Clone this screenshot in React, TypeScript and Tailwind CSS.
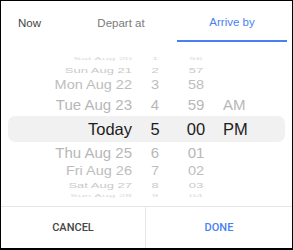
import React from "react";

type Row = {
  date: string;
  hour: string;
  min: string;
  ampm?: string;
  cls: string; // height, font size, colour
  squash: string; // vertical squash of the wheel
};

const rows: Row[] = [
  { date: "Sat Aug 20", hour: "1", min: "56", cls: "h-[10px] text-[12px] text-[#dadada]", squash: "scale-y-[0.35]" },
  { date: "Sun Aug 21", hour: "2", min: "57", cls: "h-[13px] text-[13px] text-[#c9c9c9]", squash: "scale-y-[0.6]" },
  { date: "Mon Aug 22", hour: "3", min: "58", cls: "h-[16px] text-[14.5px] text-[#bdbdbd]", squash: "scale-y-[0.85]" },
  { date: "Tue Aug 23", hour: "4", min: "59", ampm: "AM", cls: "h-[23px] text-[15px] text-[#b7b7b7]", squash: "scale-y-[0.95]" },
];

const rowsBelow: Row[] = [
  { date: "Thu Aug 25", hour: "6", min: "01", cls: "h-[21px] text-[15px] text-[#b7b7b7]", squash: "scale-y-[0.95]" },
  { date: "Fri Aug 26", hour: "7", min: "02", cls: "h-[17px] text-[14.5px] text-[#bdbdbd]", squash: "scale-y-[0.85]" },
  { date: "Sat Aug 27", hour: "8", min: "03", cls: "h-[11px] text-[13px] text-[#c9c9c9]", squash: "scale-y-[0.6]" },
  { date: "Sun Aug 28", hour: "9", min: "04", cls: "h-[10px] text-[12px] text-[#dadada]", squash: "scale-y-[0.35]" },
];

function WheelRow({ row }: { row: Row }) {
  return (
    <div className={`flex items-center pl-[7px] leading-none ${row.cls}`}>
      <div className={`flex items-center w-full ${row.squash}`}>
        <span className="w-[124px] text-right">{row.date}</span>
        <span className="w-[46px] text-center">{row.hour}</span>
        <span className="w-[36px] text-center">{row.min}</span>
        <span className="ml-[9px]">{row.ampm}</span>
      </div>
    </div>
  );
}

export default function App() {
  return (
    <div className="w-[293px] h-[250px] bg-white border border-black border-b-2 flex flex-col overflow-hidden font-['Liberation_Sans',Arial,sans-serif]">
      {/* Tabs */}
      <div className="flex h-[41px] shrink-0 pl-[6px] text-[11.5px]">
        <div className="w-[45px] flex items-center justify-center pt-[5px] text-[#454545]">
          Now
        </div>
        <div className="w-[112px] ml-[13px] flex items-center justify-center pt-[5px] text-[#7b7b7b]">
          Depart at
        </div>
        <div className="w-[110px] flex items-center justify-center pt-[5px] border-b-2 border-[#4a7ff2] text-[#4a7ff2]">
          Arrive by
        </div>
      </div>

      {/* Wheel picker */}
      <div className="flex flex-col h-[164px] shrink-0 pt-[12px] overflow-hidden">
        {rows.map((r) => (
          <WheelRow key={r.date} row={r} />
        ))}
        <div className="flex items-center h-[26px] mx-[7px] rounded-[7px] bg-[#f1f1f1] text-[16.5px] leading-none text-[#1d1d1d]">
          <span className="w-[124px] text-right">Today</span>
          <span className="w-[46px] text-center">5</span>
          <span className="w-[36px] text-center">00</span>
          <span className="ml-[9px]">PM</span>
        </div>
        {rowsBelow.map((r) => (
          <WheelRow key={r.date} row={r} />
        ))}
      </div>

      {/* Actions */}
      <div className="flex flex-1 border-t border-[#e6e6e6] font-['Roboto',sans-serif] text-[11px] font-medium">
        <button className="w-[145px] flex items-center justify-center pt-[2px] text-[#454545] border-r border-[#e6e6e6]">
          CANCEL
        </button>
        <button className="flex-1 flex items-center justify-center pt-[2px] text-[#4a7ff2]">
          DONE
        </button>
      </div>
    </div>
  );
}
